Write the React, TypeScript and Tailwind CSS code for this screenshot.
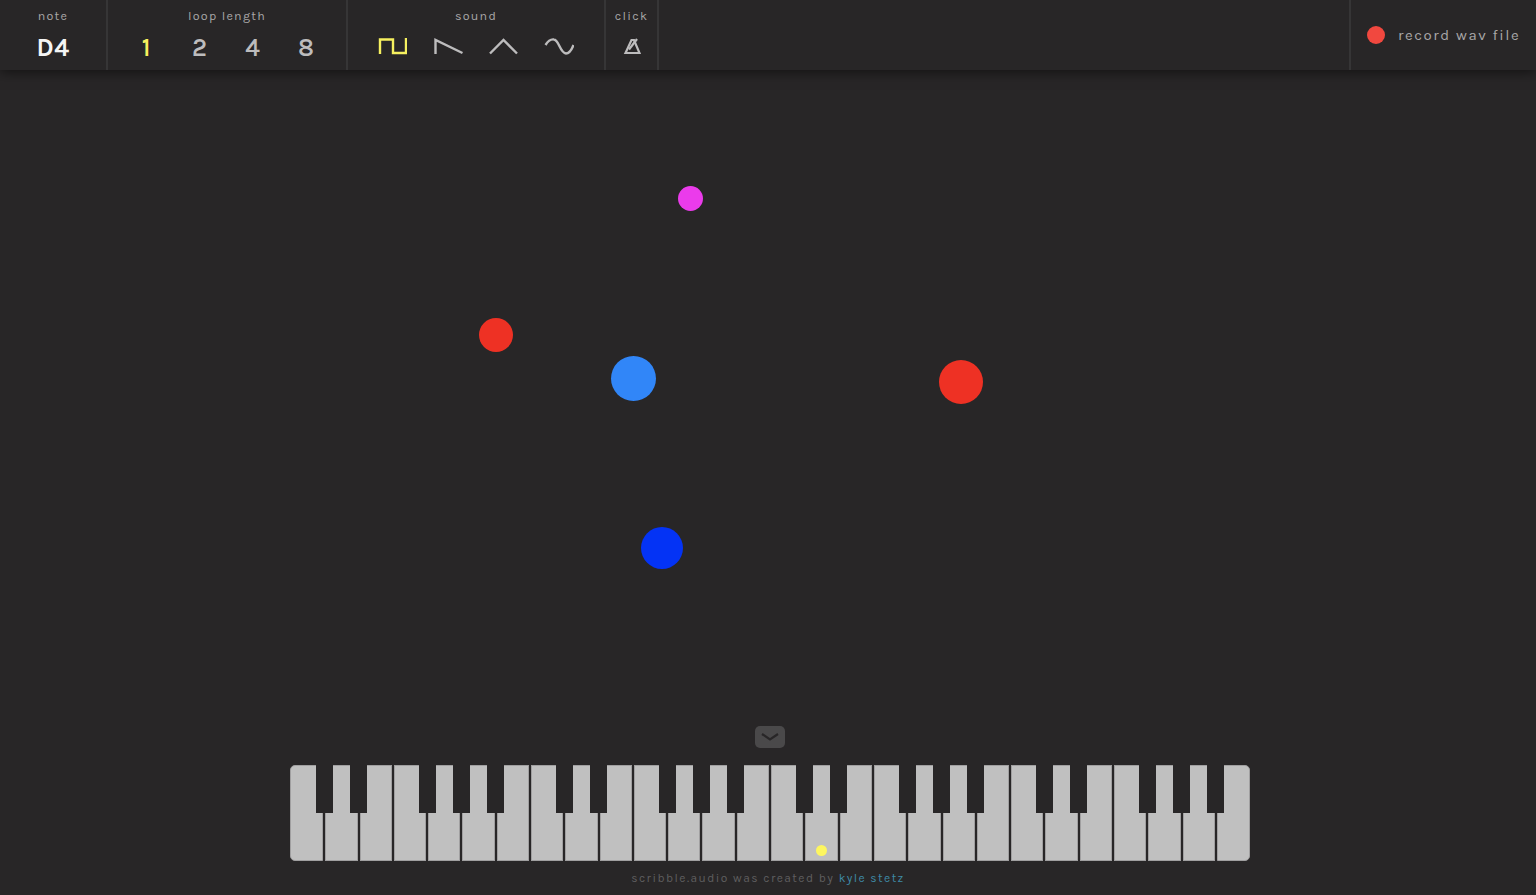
import React from 'react';

const whiteCount = 28;
const keyPitch = 960 / whiteCount;
// white keys that have a black key on their right edge
const blackAfter = [0, 1, 3, 4, 5];
const blackKeys: number[] = [];
for (let octave = 0; octave < 4; octave++) {
  for (const i of blackAfter) blackKeys.push(octave * 7 + i + 1);
}

const font = 'font-["Karla","Inter","Liberation_Sans",sans-serif]';

const Label = ({ children }: { children: React.ReactNode }) => (
  <div className="text-[12.5px] leading-4 tracking-[0.1em] text-[#a8a7a8]">{children}</div>
);

const Section = ({ label, className, children }: { label: string; className: string; children: React.ReactNode }) => (
  <div className={`flex h-full flex-col items-center border-r-2 border-[#363536] pt-[8px] ${className}`}>
    <Label>{label}</Label>
    {children}
  </div>
);

const WaveIcon = ({ d, active }: { d: string; active?: boolean }) => (
  <svg viewBox="0 0 30 20" className={`h-5 w-[30px] ${active ? 'text-[#f6f05f]' : 'text-[#bdbcbd]'}`} fill="none" stroke="currentColor" strokeWidth="2.4">
    <path d={d} />
  </svg>
);

const Dot = ({ x, y, size, className }: { x: string; y: string; size: string; className: string }) => (
  <div className={`absolute rounded-full ${x} ${y} ${size} ${className}`} />
);

export default function App() {
  return (
    <div className={`flex h-[895px] w-full flex-col overflow-hidden bg-[#282627] ${font}`}>
      {/* Toolbar */}
      <header className="relative z-10 flex h-[70px] shrink-0 items-stretch bg-[#282627] shadow-[0_2px_12px_rgba(0,0,0,0.55)]">
        <Section label="note" className="w-[108px]">
          <div className="mt-[8px] text-[25px] font-bold leading-8 tracking-[0.02em] text-[#f4f4f4]">D4</div>
        </Section>
        <Section label="loop length" className="w-[240px]">
          <div className="mr-[2px] mt-[8px] flex text-[25px] font-semibold leading-8 text-[#bdbcbd]">
            <span className="w-[53.3px] text-center text-[#f6f05f]">1</span>
            <span className="w-[53.3px] text-center">2</span>
            <span className="w-[53.3px] text-center">4</span>
            <span className="w-[53.3px] text-center">8</span>
          </div>
        </Section>
        <Section label="sound" className="w-[258px]">
          <div className="mr-[1px] mt-[11px] flex gap-[25.5px]">
            <WaveIcon active d="M3 19 V4.5 H16 V18 H29 V3" />
            <WaveIcon d="M2.5 19 V5 L29.5 18" />
            <WaveIcon d="M2 18.5 L15.5 5 L29 18.5" />
            <WaveIcon d="M1.5 10 C4 6 7 4 10 4.5 C15 5 16 18 22 18.5 C25.5 18.5 28 14 29.5 10" />
          </div>
        </Section>
        <Section label="click" className="w-[53px]">
          <svg viewBox="0 0 20 20" className="mr-[1px] mt-[11px] h-5 w-5 text-[#bdbcbd]" fill="none" stroke="currentColor" strokeWidth="2.2">
            <path d="M4.5 18 L10.5 5 H13 L18.5 18 Z" />
            <path d="M8 14.5 L16 4" />
          </svg>
        </Section>
        <button className="ml-auto flex w-[187px] items-center border-l-2 border-[#363536] pl-[16px]">
          <span className="h-[18px] w-[18px] rounded-full bg-[#f1483f]" />
          <span className="ml-[13px] text-[15px] tracking-[0.105em] text-[#a8a7a8]">record wav file</span>
        </button>
      </header>

      {/* Canvas */}
      <main className="relative flex-1">
        <Dot x="left-[678px]" y="top-[116px]" size="h-[25px] w-[25px]" className="bg-[#eb3beb]" />
        <Dot x="left-[479px]" y="top-[248px]" size="h-[34px] w-[34px]" className="bg-[#ee3124]" />
        <Dot x="left-[611px]" y="top-[286px]" size="h-[45px] w-[45px]" className="bg-[#3186f8]" />
        <Dot x="left-[939px]" y="top-[290px]" size="h-[44px] w-[44px]" className="bg-[#ee3124]" />
        <Dot x="left-[641px]" y="top-[457px]" size="h-[42px] w-[42px]" className="bg-[#0433f5]" />
      </main>

      {/* Keyboard */}
      <footer className="flex shrink-0 flex-col items-center">
        <div className="flex flex-col items-center pl-[4px]">
          <button className="flex h-[22px] w-[30px] items-center justify-center rounded-[5px] bg-[#4a494a]">
            <svg viewBox="0 0 20 8" className="h-2 w-5 text-[#282627]" fill="none" stroke="currentColor" strokeWidth="2.2">
              <path d="M2 1 L10 6.5 L18 1" />
            </svg>
          </button>
          <div className="relative mt-[17px] flex h-[96px] w-[960px] gap-[2px]">
            {Array.from({ length: whiteCount }, (_, i) => (
              <div
                key={i}
                className={`relative flex-1 border border-[#a09fa0] bg-[#c0c0c0] ${
                  i === 0 ? 'grow-[1.03] rounded-l-[5px]' : i === whiteCount - 1 ? 'grow-[1.03] rounded-r-[5px]' : ''
                }`}
              >
                {i === 15 && <span className="absolute bottom-[4px] left-[10px] h-[11px] w-[11px] rounded-full bg-[#fdf65f]" />}
              </div>
            ))}
            {blackKeys.map((k) => (
              <div
                key={k}
                className="absolute top-0 h-[48px] w-[17px] bg-[#282627]"
                style={{ left: k * keyPitch - 8.5 }}
              />
            ))}
          </div>
        </div>
        <div className="mt-[9px] h-[25px] text-[12px] leading-4 tracking-[0.12em] text-[#5f5e5f]">
          scribble.audio was created by <a className="text-[#3f8aa6]">kyle stetz</a>
        </div>
      </footer>
    </div>
  );
}
